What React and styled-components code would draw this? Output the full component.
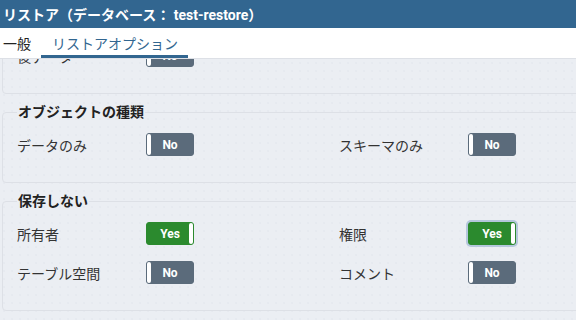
import React from 'react';
import styled, {createGlobalStyle} from "styled-components";

const GlobalStyle = createGlobalStyle`
  html, body {
    margin: 0;
    padding: 0;
    width: 576px;
    height: 320px;
    overflow: hidden;
    background: #ebeef3;
    font-family: Roboto, "Noto Sans CJK JP", sans-serif;
    color: #222;
  }
`

const Dialog = styled.div`
  display: flex;
  flex-direction: column;
  height: 320px;
  overflow: hidden;
`

const Header = styled.div`
  height: 28px;
  flex: none;
  background: #326690;
  color: #fff;
  font-weight: 700;
  font-size: 14px;
  display: flex;
  align-items: center;
  padding-left: 3px;
  white-space: nowrap;
`

const TabBar = styled.div`
  height: 30px;
  flex: none;
  background: #fff;
  border-bottom: 1px solid #dde0e6;
  display: flex;
  align-items: stretch;
`

const Tab = styled.div`
  display: flex;
  align-items: center;
  padding: 3px 10px 0 ${props => props.first ? '3px' : '11px'};
  font-size: 14px;
  color: ${props => props.active ? '#326690' : '#222'};
  border-bottom: 3px solid ${props => props.active ? '#326690' : 'transparent'};
  white-space: nowrap;
`

const Body = styled.div`
  flex: 1;
  overflow: hidden;
  background-color: #ebeef3;
  background-image: radial-gradient(#e0e4ea 0.6px, transparent 0.8px);
  background-size: 8px 8px;
`

const Scrolled = styled.div`
  margin-top: -93px;
  padding: 8px 0 8px 2px;
  display: flex;
  flex-direction: column;
  gap: 8px;
`

const Group = styled.fieldset`
  margin: 0;
  width: 676px;
  box-sizing: border-box;
  border: 1px solid #dde0e6;
  border-radius: 4px;
  padding: 11px 14px 26px;
  min-inline-size: auto;
`

const Legend = styled.legend`
  font-size: 14px;
  font-weight: 700;
  line-height: 20px;
  padding: 0 1px;
  color: #222;
`

const Grid = styled.div`
  display: grid;
  grid-template-columns: 322px 322px;
  row-gap: 16px;
`

const Field = styled.div`
  display: flex;
  align-items: center;
  height: 23px;
`

const Label = styled.span`
  width: 129px;
  font-size: 14px;
  color: #333;
  white-space: nowrap;
`

const Switch = styled.div`
  width: 48px;
  height: 23px;
  box-sizing: border-box;
  border-radius: 3px;
  display: flex;
  flex-direction: ${props => props.on ? 'row-reverse' : 'row'};
  align-items: stretch;
  padding: 1px;
  background: ${props => props.on ? '#2b8a2e' : '#5b6b7b'};
  border: 1px solid ${props => props.on ? '#2b8a2e' : '#5b6b7b'};
  box-shadow: ${props => props.focused ? '0 0 0 2px #b4c7dc' : 'none'};
`

const Knob = styled.span`
  width: 4px;
  flex: none;
  background: #fff;
  border-radius: 2px;
  margin: -1px;
`

const SwitchText = styled.span`
  flex: 1;
  display: flex;
  align-items: center;
  justify-content: center;
  color: #fff;
  font-size: 12px;
  font-weight: 700;
  padding-${props => props.on ? 'left' : 'right'}: 2px;
`

const Toggle = ({on, focused}) => (
    <Switch on={on} focused={focused}>
        <Knob/>
        <SwitchText on={on}>{on ? 'Yes' : 'No'}</SwitchText>
    </Switch>
);

const Item = ({label, on, focused}) => (
    <Field>
        <Label>{label}</Label>
        <Toggle on={on} focused={focused}/>
    </Field>
);

const groups = [
    {
        title: 'セクション',
        items: [
            {label: '前データ', on: false},
            {label: 'データ', on: false},
            {label: '後データ', on: false},
        ]
    },
    {
        title: 'オブジェクトの種類',
        items: [
            {label: 'データのみ', on: false},
            {label: 'スキーマのみ', on: false},
        ]
    },
    {
        title: '保存しない',
        items: [
            {label: '所有者', on: true},
            {label: '権限', on: true, focused: true},
            {label: 'テーブル空間', on: false},
            {label: 'コメント', on: false},
        ]
    },
];

const App = () => {
    return (
        <Dialog>
            <GlobalStyle/>
            <Header>リストア（データベース： test-restore）</Header>
            <TabBar>
                <Tab first>一般</Tab>
                <Tab active>リストアオプション</Tab>
            </TabBar>
            <Body>
                <Scrolled>
                    {groups.map(g => (
                        <Group key={g.title}>
                            <Legend>{g.title}</Legend>
                            <Grid>
                                {g.items.map(it => (
                                    <Item key={it.label} {...it}/>
                                ))}
                            </Grid>
                        </Group>
                    ))}
                </Scrolled>
            </Body>
        </Dialog>
    );
};

export default App;
